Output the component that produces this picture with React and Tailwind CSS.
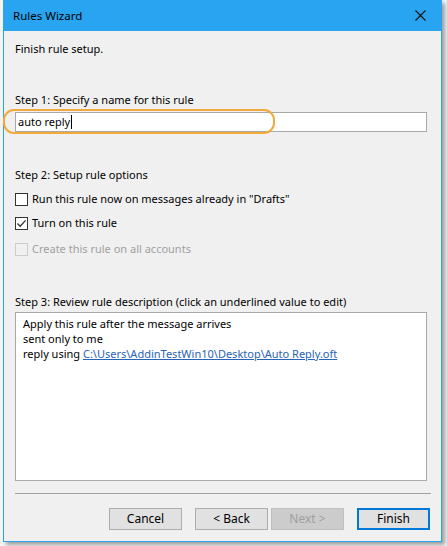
import React from "react";

const font = { fontFamily: '"Noto Sans", "Open Sans", Arial, sans-serif' };

function CheckBox({ checked, disabled }) {
  return (
    <span
      className={
        "flex h-[13px] w-[13px] shrink-0 items-center justify-center border " +
        (disabled ? "border-[#cccccc] bg-[#f0f0f0]" : "border-[#333333] bg-white")
      }
    >
      {checked && (
        <svg width="11" height="11" viewBox="0 0 11 11">
          <path d="M1.5 5.5 L4.2 8.3 L9.6 2.4" fill="none" stroke="#333" strokeWidth="1.3" />
        </svg>
      )}
    </span>
  );
}

function Button({ children, disabled, primary }) {
  let cls = "flex h-[22px] w-[73px] items-center justify-center text-[12px] ";
  if (disabled) cls += "border border-[#bfbfbf] bg-[#cccccc] text-[#9f9f9f]";
  else if (primary) cls += "border-2 border-[#0078d7] bg-[#e1e1e1] text-black";
  else cls += "border border-[#adadad] bg-[#e1e1e1] text-black";
  return <div className={cls}>{children}</div>;
}

export default function App() {
  return (
    <div className="h-[546px] w-[447px] overflow-hidden bg-[#f4f4f4]" style={font}>
      <div className="ml-[3px] flex h-[542px] w-[439px] flex-col border border-t-0 border-[#2aa3ef] bg-[#f0f0f0] shadow-[3px_3px_4px_rgba(0,0,0,0.35)]">
        {/* title bar */}
        <div className="-mx-px flex h-[31px] shrink-0 items-center justify-between bg-[#28a4f0] pl-[10px] pr-[12px]">
          <span className="text-[11.5px] text-black">Rules Wizard</span>
          <svg width="11" height="11" viewBox="0 0 11 11" className="mr-[4px]">
            <path d="M0.5 0.5 L10.5 10.5 M10.5 0.5 L0.5 10.5" stroke="#111" strokeWidth="1.1" />
          </svg>
        </div>

        <div className="flex flex-1 flex-col pl-[11px] pr-[14px] text-[11px] leading-[16px] text-black">
          <div className="mt-[10px] h-[16px]">Finish rule setup.</div>

          <div className="mt-[35px] h-[16px]">Step 1: Specify a name for this rule</div>
          <div className="relative mt-[4px]">
            <div className="flex h-[20px] items-center border border-[#a9a9a9] bg-white pl-[2px]">
              <span>auto reply</span>
              <span className="ml-[1px] h-[14px] w-px bg-black" />
            </div>
            <div className="absolute left-[-12px] top-[-3px] h-[25px] w-[272px] rounded-[11px] border-2 border-[#f2a93b]" />
          </div>

          <div className="mt-[35px] h-[16px]">Step 2: Setup rule options</div>
          <div className="mt-[8px] flex h-[16px] items-center gap-[4px]">
            <CheckBox />
            <span>Run this rule now on messages already in "Drafts"</span>
          </div>
          <div className="mt-[8px] flex h-[16px] items-center gap-[4px]">
            <CheckBox checked />
            <span>Turn on this rule</span>
          </div>
          <div className="mt-[10px] flex h-[16px] items-center gap-[4px] text-[#a0a0a0]">
            <CheckBox disabled />
            <span>Create this rule on all accounts</span>
          </div>

          <div className="mt-[37px] h-[16px]">Step 3: Review rule description (click an underlined value to edit)</div>
          <div className="mt-[2px] h-[169px] border border-[#a9a9a9] bg-white pl-[7px] pt-[3px] leading-[15px]">
            <div>Apply this rule after the message arrives</div>
            <div>sent only to me</div>
            <div>
              reply using{" "}
              <span className="text-[#2a63b6] underline">C:\Users\AddinTestWin10\Desktop\Auto Reply.oft</span>
            </div>
          </div>

          <div className="-mr-[4px] mt-[12px] h-px bg-[#a0a0a0]" />

          <div className="-mr-[3px] mt-[14px] flex justify-end">
            <Button>Cancel</Button>
            <div className="ml-[13px]">
              <Button>&lt; Back</Button>
            </div>
            <div className="ml-[3px]">
              <Button disabled>Next &gt;</Button>
            </div>
            <div className="ml-[13px]">
              <Button primary>Finish</Button>
            </div>
          </div>
        </div>
      </div>
    </div>
  );
}
